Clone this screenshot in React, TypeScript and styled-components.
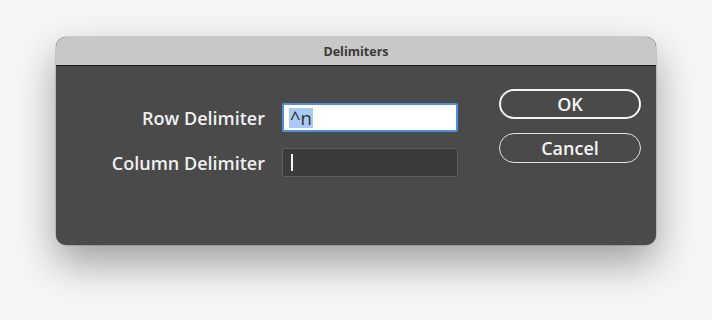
import styled, { createGlobalStyle } from "styled-components";

const GlobalStyle = createGlobalStyle`
    html, body {
        margin: 0;
        padding: 0;
        background: #f6f6f6;
    }
    body {
        width: 712px;
        height: 320px;
        overflow: hidden;
        font-family: "Open Sans", "Lato", sans-serif;
    }
`;

const Stage = styled.div`
    padding: 37px 56px 0 56px;
`;

const Window = styled.div`
    width: 600px;
    height: 208px;
    border-radius: 10px;
    overflow: hidden;
    background: #4a4a4a;
    box-shadow: 0 18px 40px rgba(0, 0, 0, 0.36), 0 0 0 0.5px rgba(0, 0, 0, 0.25);
    display: flex;
    flex-direction: column;
`;

const TitleBar = styled.div`
    height: 28px;
    background: #c8c8c8;
    border-bottom: 1px solid #1c1c1c;
    display: flex;
    align-items: center;
    justify-content: center;
    font-family: "Open Sans", sans-serif;
    font-weight: 700;
    font-size: 12.5px;
    color: #3a3a3a;
`;

const Body = styled.div`
    flex: 1;
    display: flex;
    align-items: flex-start;
    padding: 23px 15px 0 0;
`;

const Form = styled.div`
    display: grid;
    grid-template-columns: 209px 176px;
    column-gap: 17px;
    row-gap: 16px;
    margin-top: 14px;
`;

const Label = styled.label`
    display: flex;
    align-items: center;
    justify-content: flex-end;
    font-size: 18px;
    font-weight: 600;
    color: #f0f0f0;
`;

const Field = styled.div<{ $focused?: boolean }>`
    height: 29px;
    box-sizing: border-box;
    display: flex;
    align-items: center;
    padding-left: 5px;
    border-radius: 2px;
    background: ${({ $focused }) => ($focused ? "#ffffff" : "#3b3b3b")};
    border: ${({ $focused }) => ($focused ? "2px solid #4f8fe0" : "1px solid #5e5e5e")};
    font-size: 18.5px;
    color: #303030;
`;

const Selection = styled.span`
    background: #a9c9f7;
    padding: 0 1px;
    line-height: 20px;
`;

const Caret = styled.span`
    width: 2px;
    height: 17px;
    margin-left: 3px;
    background: #f4f4f4;
`;

const Buttons = styled.div`
    margin-left: 41px;
    display: flex;
    flex-direction: column;
    gap: 14px;
`;

const Button = styled.button<{ $primary?: boolean }>`
    width: 142px;
    height: 30px;
    box-sizing: border-box;
    border-radius: 15px;
    background: transparent;
    border: ${({ $primary }) => ($primary ? "2.5px solid #f4f4f4" : "1.5px solid #e2e2e2")};
    color: #f4f4f4;
    font-family: "Open Sans", "Lato", sans-serif;
    font-size: 18px;
    font-weight: 600;
    padding: 0;
    cursor: pointer;
`;

export default function App() {
    return (
        <>
            <GlobalStyle />
            <Stage>
                <Window>
                    <TitleBar>Delimiters</TitleBar>
                    <Body>
                        <Form>
                            <Label>Row Delimiter</Label>
                            <Field $focused>
                                <Selection>^n</Selection>
                            </Field>
                            <Label>Column Delimiter</Label>
                            <Field>
                                <Caret />
                            </Field>
                        </Form>
                        <Buttons>
                            <Button $primary>OK</Button>
                            <Button>Cancel</Button>
                        </Buttons>
                    </Body>
                </Window>
            </Stage>
        </>
    );
}
